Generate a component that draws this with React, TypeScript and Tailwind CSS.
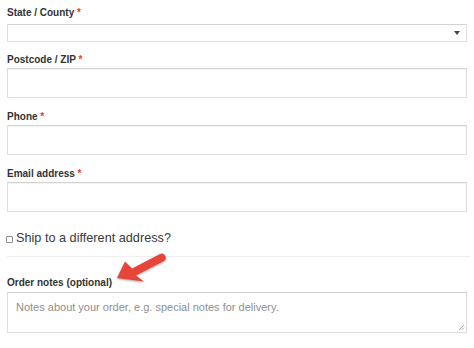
import React from "react";

const font = { fontFamily: '"Liberation Sans", Arial, sans-serif' };

function Label({ text, required = true }: { text: string; required?: boolean }) {
  return (
    <div className="h-[13px] text-[10px] leading-[13px] font-bold text-[#333333]">
      {text}
      {required && <span className="text-[#e2401c]"> *</span>}
    </div>
  );
}

function Input() {
  return (
    <div className="h-[30px] w-[460px] border border-[#dedede] border-t-[#d2d2d2] bg-white shadow-[inset_0_1px_1px_rgba(0,0,0,0.05)]" />
  );
}

export default function App() {
  return (
    <div className="relative w-[474px] h-[348px] bg-white overflow-hidden" style={font}>
      <div className="flex flex-col px-[7px] pt-[6px]">
        <Label text="State / County" />
        <div className="mt-[5px] h-[18px] w-[460px] border border-[#dedede] border-t-[#d2d2d2] bg-white flex items-center justify-end pr-[6px]">
          <svg width="6" height="4" viewBox="0 0 6 4">
            <path d="M0 0 L6 0 L3 4 Z" fill="#444" />
          </svg>
        </div>

        <div className="mt-[11px]">
          <Label text="Postcode / ZIP" />
        </div>
        <div className="mt-[2px]">
          <Input />
        </div>

        <div className="mt-[12px]">
          <Label text="Phone" />
        </div>
        <div className="mt-[2px]">
          <Input />
        </div>

        <div className="mt-[12px]">
          <Label text="Email address" />
        </div>
        <div className="mt-[2px]">
          <Input />
        </div>

        <div className="mt-[18px] flex items-center h-[16px] gap-[3px] -ml-[1px]">
          <div className="w-[7px] h-[7px] border border-[#8a8a8a] rounded-[1px] bg-white mt-[3px]" />
          <span className="text-[12.7px] leading-[16px] text-[#3a3a3a]">Ship to a different address?</span>
        </div>

        <div className="mt-[10px] h-px w-[463px] bg-[#eeeeee]" />

        <div className="mt-[19px]">
          <Label text="Order notes (optional)" required={false} />
        </div>
        <div className="mt-[3px] relative h-[41px] w-[460px] border border-[#dedede] border-t-[#d2d2d2] bg-white px-[8px] pt-[8px] text-[11px] leading-[13px]">
          <div className="text-[#8f8f8f]">
            Notes about your order, e.g. special notes for delivery.
          </div>
          <svg className="absolute right-[1px] bottom-[1px]" width="7" height="7" viewBox="0 0 7 7">
            <path d="M1 6 L6 1 M3.5 6 L6 3.5" stroke="#999" strokeWidth="0.8" />
          </svg>
        </div>
      </div>

      <svg
        className="absolute left-[110px] top-[248px]"
        width="60"
        height="40"
        viewBox="0 0 60 40"
        style={{ filter: "drop-shadow(0 1px 1px rgba(0,0,0,0.35))" }}
      >
        <path
          d="M7 30 L15 13.5 L22.1 20.5 L50.1 6 A4 4 0 0 1 53.9 13 L25.9 27.5 L34 33.5 Z"
          fill="#e8453a"
        />
      </svg>
    </div>
  );
}
